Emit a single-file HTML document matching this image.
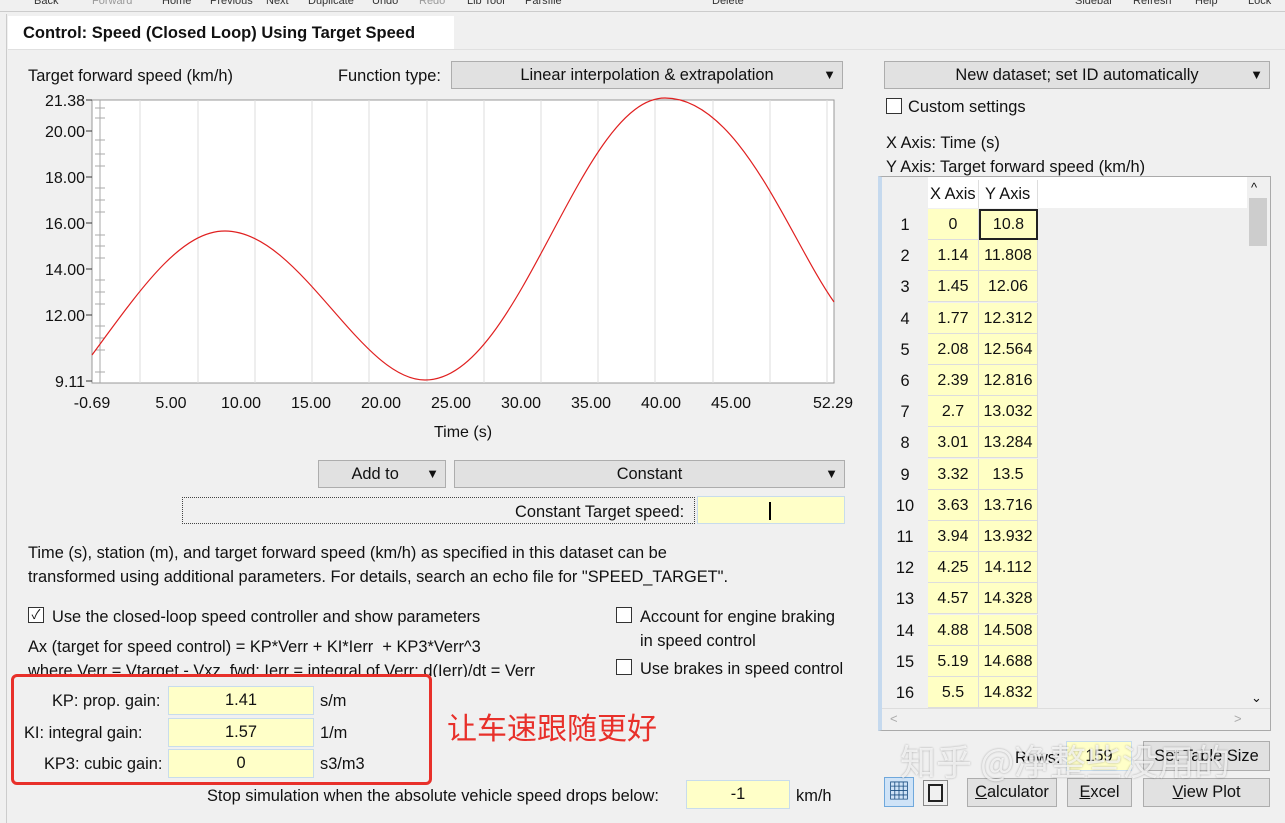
<!DOCTYPE html>
<html><head><meta charset="utf-8"><style>
body{margin:0;width:1285px;height:823px;background:#f0f0f0;position:relative;overflow:hidden;font-family:"Liberation Sans","Noto Sans CJK SC",sans-serif;font-size:16.4px;color:#111}
.t{position:absolute;white-space:nowrap;line-height:20px}
.b{position:absolute;box-sizing:border-box}
.btn{position:absolute;box-sizing:border-box;background:#e1e1e1;border:1px solid #adadad;text-align:center;line-height:26px}
.y{position:absolute;box-sizing:border-box;background:#ffffc8;border:1px solid #c8dcec;text-align:center}
.arr{position:absolute;right:6px;top:0;font-size:13px}
.cell{position:absolute;box-sizing:border-box;background:#ffffc4;border-right:1px solid #ddd;border-bottom:1px solid #ddd;text-align:center;line-height:31px;font-size:16px}
.rn{position:absolute;width:30px;text-align:center;line-height:31px}
</style></head><body>
<div class="b" style="left:0;top:0;width:1285px;height:12px;background:#f0f0f0;border-bottom:1px solid #ccc;overflow:hidden;font-size:11px;color:#333">
<span class="t" style="left:34px;top:-9px">Back</span><span class="t" style="left:92px;top:-9px;color:#999">Forward</span><span class="t" style="left:162px;top:-9px">Home</span><span class="t" style="left:210px;top:-9px">Previous</span><span class="t" style="left:266px;top:-9px">Next</span><span class="t" style="left:308px;top:-9px">Duplicate</span><span class="t" style="left:372px;top:-9px">Undo</span><span class="t" style="left:419px;top:-9px;color:#999">Redo</span><span class="t" style="left:467px;top:-9px">Lib Tool</span><span class="t" style="left:525px;top:-9px">Parsfile</span><span class="t" style="left:712px;top:-9px">Delete</span><span class="t" style="left:1075px;top:-9px">Sidebar</span><span class="t" style="left:1133px;top:-9px">Refresh</span><span class="t" style="left:1195px;top:-9px">Help</span><span class="t" style="left:1248px;top:-9px">Lock</span></div>
<div class="b" style="left:6px;top:14px;width:1px;height:809px;background:#ccc"></div>
<div class="b" style="left:8px;top:16px;width:446px;height:33px;background:#fff"></div>
<div class="t" style="left:23px;top:23px;font-weight:bold;font-size:16.5px">Control: Speed (Closed Loop) Using Target Speed</div>
<div class="b" style="left:8px;top:49px;width:1277px;height:1px;background:#e0e0e0"></div>

<div class="t" style="left:28px;top:66px">Target forward speed (km/h)</div>
<div class="t" style="left:338px;top:66px">Function type:</div>
<div class="btn" style="left:451px;top:61px;width:392px;height:28px">Linear interpolation &amp; extrapolation<span class="arr">▼</span></div>

<svg class="b" style="left:0;top:0" width="870" height="445">
<rect x="92" y="100" width="742" height="283" fill="#fff" stroke="#999"/>
<g stroke="#ddd">
<line x1="140" y1="100" x2="140" y2="383"/><line x1="198" y1="100" x2="198" y2="383"/><line x1="255" y1="100" x2="255" y2="383"/><line x1="312" y1="100" x2="312" y2="383"/><line x1="369" y1="100" x2="369" y2="383"/><line x1="427" y1="100" x2="427" y2="383"/><line x1="484" y1="100" x2="484" y2="383"/><line x1="541" y1="100" x2="541" y2="383"/><line x1="598" y1="100" x2="598" y2="383"/><line x1="655" y1="100" x2="655" y2="383"/><line x1="713" y1="100" x2="713" y2="383"/><line x1="770" y1="100" x2="770" y2="383"/><line x1="827" y1="100" x2="827" y2="383"/>
</g>
<g stroke="#aaa"><line x1="100" y1="100" x2="100" y2="383"/>
<line x1="95" y1="108" x2="105" y2="108"/><line x1="95" y1="118" x2="105" y2="118"/><line x1="95" y1="140" x2="105" y2="140"/><line x1="95" y1="154" x2="105" y2="154"/><line x1="95" y1="166" x2="105" y2="166"/><line x1="95" y1="188" x2="105" y2="188"/><line x1="95" y1="200" x2="105" y2="200"/><line x1="95" y1="212" x2="105" y2="212"/><line x1="95" y1="235" x2="105" y2="235"/><line x1="95" y1="246" x2="105" y2="246"/><line x1="95" y1="258" x2="105" y2="258"/><line x1="95" y1="280" x2="105" y2="280"/><line x1="95" y1="292" x2="105" y2="292"/><line x1="95" y1="304" x2="105" y2="304"/><line x1="95" y1="326" x2="105" y2="326"/><line x1="95" y1="338" x2="105" y2="338"/><line x1="95" y1="350" x2="105" y2="350"/><line x1="95" y1="372" x2="105" y2="372"/></g>
<g stroke="#333"><line x1="86" y1="100" x2="92" y2="100"/><line x1="86" y1="131" x2="92" y2="131"/><line x1="86" y1="177" x2="92" y2="177"/><line x1="86" y1="223" x2="92" y2="223"/><line x1="86" y1="269" x2="92" y2="269"/><line x1="86" y1="315" x2="92" y2="315"/><line x1="86" y1="381" x2="92" y2="381"/></g>
<path d="M92,355 C140,290 180,231 225,231 C300,231 360,380 425,380 C520,380 580,98 665,98 C740,98 790,240 834,302" fill="none" stroke="#e02020" stroke-width="1.2"/>
<g font-family="Liberation Sans" font-size="16" fill="#111" text-anchor="end">
<text x="85" y="106">21.38</text><text x="85" y="137">20.00</text><text x="85" y="183">18.00</text><text x="85" y="229">16.00</text><text x="85" y="275">14.00</text><text x="85" y="321">12.00</text><text x="85" y="387">9.11</text></g>
<g font-family="Liberation Sans" font-size="16" fill="#111" text-anchor="middle">
<text x="92" y="408">-0.69</text><text x="171" y="408">5.00</text><text x="241" y="408">10.00</text><text x="311" y="408">15.00</text><text x="381" y="408">20.00</text><text x="451" y="408">25.00</text><text x="521" y="408">30.00</text><text x="591" y="408">35.00</text><text x="661" y="408">40.00</text><text x="731" y="408">45.00</text><text x="833" y="408">52.29</text>
<text x="463" y="437">Time (s)</text></g>
</svg>

<div class="btn" style="left:318px;top:460px;width:128px;height:28px">&nbsp;Add to&nbsp;&nbsp;&nbsp;&nbsp;<span class="arr">▼</span></div>
<div class="btn" style="left:454px;top:460px;width:391px;height:28px">Constant<span class="arr">▼</span></div>
<div class="b" style="left:182px;top:497px;width:513px;height:27px;border:1px dotted #444"></div>
<div class="t" style="left:515px;top:502px">Constant Target speed:</div>
<div class="y" style="left:697px;top:496px;width:148px;height:28px"><div class="b" style="left:71px;top:5px;width:2px;height:18px;background:#000"></div></div>

<div class="t" style="left:28px;top:543px">Time (s), station (m), and target forward speed (km/h) as specified in this dataset can be</div>
<div class="t" style="left:28px;top:567px">transformed using additional parameters. For details, search an echo file for "SPEED_TARGET".</div>

<div class="b" style="left:28px;top:607px;width:16px;height:16px;border:1px solid #333;background:#fff;font-size:13px;line-height:14px;text-align:center">✓</div>
<div class="t" style="left:52px;top:607px">Use the closed-loop speed controller and show parameters</div>
<div class="t" style="left:28px;top:637px">Ax (target for speed control) = KP*Verr + KI*Ierr&nbsp; + KP3*Verr^3</div>
<div class="t" style="left:28px;top:661px;height:16px;overflow:hidden">where Verr = Vtarget - Vxz_fwd; Ierr = integral of Verr: d(Ierr)/dt = Verr</div>
<div class="b" style="left:616px;top:607px;width:16px;height:16px;border:1px solid #333;background:#fff"></div>
<div class="t" style="left:640px;top:607px">Account for engine braking</div>
<div class="t" style="left:640px;top:631px">in speed control</div>
<div class="b" style="left:616px;top:659px;width:16px;height:16px;border:1px solid #333;background:#fff"></div>
<div class="t" style="left:640px;top:659px">Use brakes in speed control</div>

<div class="b" style="left:11px;top:674px;width:421px;height:111px;border:3px solid #e8302a;border-radius:6px"></div>
<div class="t" style="left:52px;top:691px">KP: prop. gain:</div>
<div class="y" style="left:168px;top:686px;width:146px;height:29px;line-height:27px">1.41</div>
<div class="t" style="left:320px;top:691px">s/m</div>
<div class="t" style="left:24px;top:723px">KI: integral gain:</div>
<div class="y" style="left:168px;top:718px;width:146px;height:29px;line-height:27px">1.57</div>
<div class="t" style="left:320px;top:723px">1/m</div>
<div class="t" style="left:44px;top:754px">KP3: cubic gain:</div>
<div class="y" style="left:168px;top:749px;width:146px;height:29px;line-height:27px">0</div>
<div class="t" style="left:320px;top:754px">s3/m3</div>
<div class="t" style="left:447px;top:708px;font-size:30px;line-height:36px;color:#e8302a;font-family:'Noto Sans CJK SC',sans-serif">让车速跟随更好</div>

<div class="t" style="left:207px;top:786px">Stop simulation when the absolute vehicle speed drops below:</div>
<div class="y" style="left:686px;top:780px;width:104px;height:29px;line-height:27px">-1</div>
<div class="t" style="left:796px;top:786px">km/h</div>

<div class="btn" style="left:884px;top:61px;width:386px;height:28px">New dataset; set ID automatically<span class="arr">▼</span></div>
<div class="b" style="left:886px;top:98px;width:16px;height:16px;border:1px solid #333;background:#fff"></div>
<div class="t" style="left:908px;top:97px">Custom settings</div>
<div class="t" style="left:886px;top:133px">X Axis: Time (s)</div>
<div class="t" style="left:886px;top:157px">Y Axis: Target forward speed (km/h)</div>
<div class="b" style="left:878px;top:176px;width:393px;height:555px;background:#f0f0f0;border:1px solid #aaa;border-left:4px solid #c5d9ee"></div>
<div class="b" style="left:882px;top:177px;width:365px;height:531px;background:#f0f0f0"></div>
<div class="b" style="left:928px;top:177px;width:319px;height:31px;background:#fff"></div>
<div class="t" style="left:930px;top:184px">X Axis</div>
<div class="t" style="left:985px;top:184px">Y Axis</div>
<div class="b" style="left:978px;top:180px;width:1px;height:28px;background:#ddd"></div>
<div class="b" style="left:1037px;top:180px;width:1px;height:28px;background:#ddd"></div>
<div class="b" style="left:1247px;top:177px;width:23px;height:531px;background:#f0f0f0"></div>
<div class="t" style="left:1251px;top:178px;font-size:13px">^</div>
<div class="b" style="left:1249px;top:198px;width:18px;height:48px;background:#cdcdcd"></div>
<div class="t" style="left:1251px;top:688px;font-size:13px">⌄</div>
<div class="b" style="left:882px;top:708px;width:388px;height:22px;background:#f0f0f0;border-top:1px solid #ddd"></div>
<div class="t" style="left:890px;top:709px;font-size:13px;color:#aaa">&lt;</div>
<div class="t" style="left:1234px;top:709px;font-size:13px;color:#aaa">&gt;</div>

<div class="rn" style="left:890px;top:210px">1</div><div class="cell" style="left:928px;top:209px;width:51px;height:31px">0</div><div class="cell" style="left:979px;top:209px;width:59px;height:31px;border:2px solid #222;line-height:27px">10.8</div>
<div class="rn" style="left:890px;top:241px">2</div><div class="cell" style="left:928px;top:240px;width:51px;height:31px">1.14</div><div class="cell" style="left:979px;top:240px;width:59px;height:31px">11.808</div>
<div class="rn" style="left:890px;top:272px">3</div><div class="cell" style="left:928px;top:271px;width:51px;height:31px">1.45</div><div class="cell" style="left:979px;top:271px;width:59px;height:31px">12.06</div>
<div class="rn" style="left:890px;top:304px">4</div><div class="cell" style="left:928px;top:303px;width:51px;height:31px">1.77</div><div class="cell" style="left:979px;top:303px;width:59px;height:31px">12.312</div>
<div class="rn" style="left:890px;top:335px">5</div><div class="cell" style="left:928px;top:334px;width:51px;height:31px">2.08</div><div class="cell" style="left:979px;top:334px;width:59px;height:31px">12.564</div>
<div class="rn" style="left:890px;top:366px">6</div><div class="cell" style="left:928px;top:365px;width:51px;height:31px">2.39</div><div class="cell" style="left:979px;top:365px;width:59px;height:31px">12.816</div>
<div class="rn" style="left:890px;top:397px">7</div><div class="cell" style="left:928px;top:396px;width:51px;height:31px">2.7</div><div class="cell" style="left:979px;top:396px;width:59px;height:31px">13.032</div>
<div class="rn" style="left:890px;top:428px">8</div><div class="cell" style="left:928px;top:427px;width:51px;height:31px">3.01</div><div class="cell" style="left:979px;top:427px;width:59px;height:31px">13.284</div>
<div class="rn" style="left:890px;top:460px">9</div><div class="cell" style="left:928px;top:459px;width:51px;height:31px">3.32</div><div class="cell" style="left:979px;top:459px;width:59px;height:31px">13.5</div>
<div class="rn" style="left:890px;top:491px">10</div><div class="cell" style="left:928px;top:490px;width:51px;height:31px">3.63</div><div class="cell" style="left:979px;top:490px;width:59px;height:31px">13.716</div>
<div class="rn" style="left:890px;top:522px">11</div><div class="cell" style="left:928px;top:521px;width:51px;height:31px">3.94</div><div class="cell" style="left:979px;top:521px;width:59px;height:31px">13.932</div>
<div class="rn" style="left:890px;top:553px">12</div><div class="cell" style="left:928px;top:552px;width:51px;height:31px">4.25</div><div class="cell" style="left:979px;top:552px;width:59px;height:31px">14.112</div>
<div class="rn" style="left:890px;top:584px">13</div><div class="cell" style="left:928px;top:583px;width:51px;height:31px">4.57</div><div class="cell" style="left:979px;top:583px;width:59px;height:31px">14.328</div>
<div class="rn" style="left:890px;top:616px">14</div><div class="cell" style="left:928px;top:615px;width:51px;height:31px">4.88</div><div class="cell" style="left:979px;top:615px;width:59px;height:31px">14.508</div>
<div class="rn" style="left:890px;top:647px">15</div><div class="cell" style="left:928px;top:646px;width:51px;height:31px">5.19</div><div class="cell" style="left:979px;top:646px;width:59px;height:31px">14.688</div>
<div class="rn" style="left:890px;top:678px">16</div><div class="cell" style="left:928px;top:677px;width:51px;height:31px">5.5</div><div class="cell" style="left:979px;top:677px;width:59px;height:31px">14.832</div>

<div class="t" style="left:1015px;top:748px">Rows:</div>
<div class="y" style="left:1066px;top:741px;width:66px;height:30px;line-height:28px">159</div>
<div class="btn" style="left:1143px;top:741px;width:127px;height:30px;line-height:28px">Set Table Size</div>
<div class="b" style="left:884px;top:777px;width:30px;height:30px;background:#cfe3f7;border:1px solid #6fa8dc;font-size:22px;line-height:28px;text-align:center;color:#1a4d80">▦</div>
<div class="b" style="left:923px;top:780px;width:25px;height:26px;border:1px solid #888"><div class="b" style="left:4px;top:3px;width:15px;height:18px;border:2px solid #222"></div></div>
<div class="btn" style="left:967px;top:778px;width:90px;height:29px;line-height:27px"><u>C</u>alculator</div>
<div class="btn" style="left:1067px;top:778px;width:65px;height:29px;line-height:27px"><u>E</u>xcel</div>
<div class="btn" style="left:1143px;top:778px;width:127px;height:29px;line-height:27px"><u>V</u>iew Plot</div>
<div class="t" style="left:900px;top:738px;font-size:36px;line-height:44px;color:rgba(255,255,255,0.75);font-family:'Noto Sans CJK SC',sans-serif;text-shadow:0 0 2px rgba(0,0,0,0.3)">知乎 @净整些没用的</div>
</body></html>
